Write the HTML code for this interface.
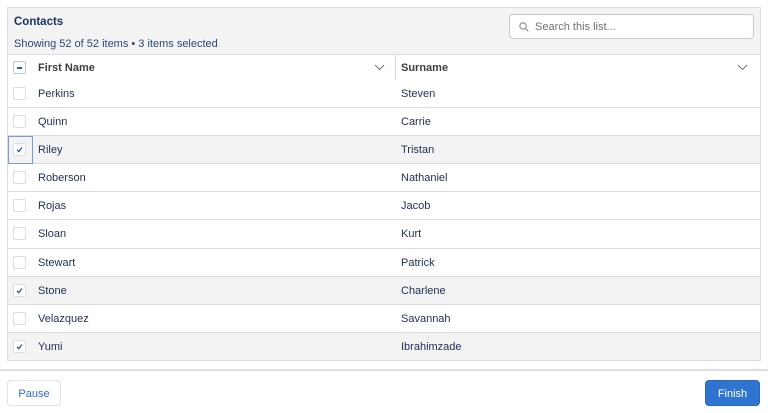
<!DOCTYPE html>
<html><head><style>
*{box-sizing:border-box;margin:0;padding:0}
body{width:768px;height:413px;background:#fff;font-family:"Liberation Sans",sans-serif;font-size:11px;color:#1e2f52;position:relative;overflow:hidden}
.card{position:absolute;left:7px;top:7px;width:754px;height:354px;border:1px solid #dcdcdc;background:#fff;overflow:hidden}
.hdr{height:47px;background:#f3f3f3;border-bottom:1px solid #dcdcdc;position:relative}
.title{position:absolute;left:6px;top:8px;font-weight:bold;font-size:11.5px;color:#16325c}
.sub{position:absolute;left:6px;top:30px;font-size:11px;color:#2a4a74}
.search{position:absolute;left:501px;top:6px;width:245px;height:25px;border:1px solid #c9c9c9;border-radius:4px;background:#fff;color:#6f6f6f;font-size:11px;padding:6px 0 0 25px}
.search svg{position:absolute;left:9px;top:7px}
.row{height:28.1px;position:relative;border-bottom:1px solid #dcdcdc}
.row.sel{background:#f3f3f3}
.th{height:25px;border-bottom:none;font-weight:bold;color:#3e3e3c}
.cb{position:absolute;left:5px;top:7px;width:13px;height:13px;border:1px solid #dedede;border-radius:2px;background:#fff}
.th .cb{top:6px;border-color:#b8c6da}
.th .cb::after{content:"";position:absolute;left:3px;top:5px;width:5px;height:1.5px;background:#1b5fc0}
.c1{position:absolute;left:30px;top:8px}
.c2{position:absolute;left:393px;top:8px}
.th .c1,.th .c2{top:7px}
.vsep{position:absolute;left:387px;top:0;width:1px;height:25px;background:#dcdcdc}
.chev{position:absolute;top:9px}
.foc{position:absolute;left:0;top:0;width:25px;height:28px;border:1px solid #7a9cd0}
.btn{position:absolute;top:380px;height:26px;border-radius:4px;font-size:11px;text-align:center;padding-top:7px}
</style></head><body>
<div class="card">
 <div class="hdr">
  <div class="title">Contacts</div>
  <div class="sub">Showing 52 of 52 items • 3 items selected</div>
  <div class="search"><svg width="10" height="10" viewBox="0 0 10 10"><circle cx="4" cy="4" r="3.2" fill="none" stroke="#8a8a8a" stroke-width="1.1"/><path d="M6.4 6.4L9.3 9.3" stroke="#8a8a8a" stroke-width="1.1"/></svg>Search this list...</div>
 </div>
 <div class="row th"><div class="cb"></div><div class="c1">First Name</div><svg class="chev" style="left:366px" width="11" height="7" viewBox="0 0 11 7"><path d="M1 1l4.5 4.5L10 1" fill="none" stroke="#777" stroke-width="1"/></svg><div class="vsep"></div><div class="c2">Surname</div><svg class="chev" style="left:729px" width="11" height="7" viewBox="0 0 11 7"><path d="M1 1l4.5 4.5L10 1" fill="none" stroke="#777" stroke-width="1"/></svg></div>
 <div class="row"><div class="cb"></div><div class="c1">Perkins</div><div class="c2">Steven</div></div>
 <div class="row"><div class="cb"></div><div class="c1">Quinn</div><div class="c2">Carrie</div></div>
 <div class="row sel"><div class="foc"></div><div class="cb"><svg width="11" height="11" viewBox="0 0 11 11"><path d="M3 5.8l1.8 1.8L8 3.5" fill="none" stroke="#1b5fc0" stroke-width="1.3"/></svg></div><div class="c1">Riley</div><div class="c2">Tristan</div></div>
 <div class="row"><div class="cb"></div><div class="c1">Roberson</div><div class="c2">Nathaniel</div></div>
 <div class="row"><div class="cb"></div><div class="c1">Rojas</div><div class="c2">Jacob</div></div>
 <div class="row"><div class="cb"></div><div class="c1">Sloan</div><div class="c2">Kurt</div></div>
 <div class="row"><div class="cb"></div><div class="c1">Stewart</div><div class="c2">Patrick</div></div>
 <div class="row sel"><div class="cb"><svg width="11" height="11" viewBox="0 0 11 11"><path d="M3 5.8l1.8 1.8L8 3.5" fill="none" stroke="#1b5fc0" stroke-width="1.3"/></svg></div><div class="c1">Stone</div><div class="c2">Charlene</div></div>
 <div class="row"><div class="cb"></div><div class="c1">Velazquez</div><div class="c2">Savannah</div></div>
 <div class="row sel" style="border-bottom:none"><div class="cb"><svg width="11" height="11" viewBox="0 0 11 11"><path d="M3 5.8l1.8 1.8L8 3.5" fill="none" stroke="#1b5fc0" stroke-width="1.3"/></svg></div><div class="c1">Yumi</div><div class="c2">Ibrahimzade</div></div>
</div>
<div style="position:absolute;left:7px;top:360px;width:754px;height:1px;background:#dcdcdc"></div>
<div style="position:absolute;left:0;top:369px;width:768px;height:2px;background:#dedede"></div>
<div class="btn" style="left:7px;width:54px;border:1px solid #e2e2e2;color:#2c6fd0;background:#fff">Pause</div>
<div class="btn" style="left:705px;width:55px;background:#2e74d0;color:#fff;border:1px solid #2a68bd">Finish</div>
</body></html>
